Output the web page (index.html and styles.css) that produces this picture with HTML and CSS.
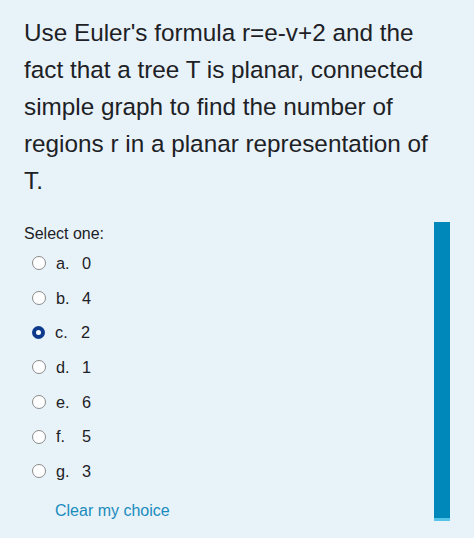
FILE: index.html
```html
<!DOCTYPE html>
<html>
<head>
<meta charset="utf-8">
<link rel="stylesheet" href="styles.css">
</head>
<body>
<div class="que">
  <div class="qtext">Use Euler's formula r=e-v+2 and the fact that a tree T is planar, connected simple graph to find the number of regions r in a planar representation of T.</div>
  <div class="ablock">
    <div class="answers">
      <div class="prompt">Select one:</div>
      <div class="opt"><span class="radio"></span><span class="letter">a.</span><span class="val">0</span></div>
      <div class="opt"><span class="radio"></span><span class="letter">b.</span><span class="val">4</span></div>
      <div class="opt"><span class="radio checked"></span><span class="letter">c.</span><span class="val">2</span></div>
      <div class="opt"><span class="radio"></span><span class="letter">d.</span><span class="val">1</span></div>
      <div class="opt"><span class="radio"></span><span class="letter">e.</span><span class="val">6</span></div>
      <div class="opt"><span class="radio"></span><span class="letter">f.</span><span class="val">5</span></div>
      <div class="opt"><span class="radio"></span><span class="letter">g.</span><span class="val">3</span></div>
      <div class="clear">Clear my choice</div>
    </div>
    <div class="bar"></div>
  </div>
</div>
</body>
</html>
```
FILE: styles.css
```css
html, body {
  margin: 0;
  padding: 0;
  background: #e8f3f9;
}
body {
  font-family: "Liberation Sans", Arial, sans-serif;
  color: #1d2125;
  width: 474px;
  height: 538px;
  overflow: hidden;
}
.que {
  padding: 14px 24px 0 24px;
}
.qtext {
  font-size: 24.3px;
  line-height: 37px;
  width: 405px;
}
.ablock {
  display: flex;
  margin-top: 23px;
}
.answers {
  flex: 1;
  padding-top: 2px;
}
.prompt {
  font-size: 16px;
  line-height: 20px;
  margin-bottom: 2px;
}
.opt {
  height: 34.7px;
  display: flex;
  align-items: center;
  font-size: 16.3px;
  padding-left: 8px;
}
.radio {
  width: 12px;
  height: 12px;
  border: 1px solid #8a8a8a;
  border-radius: 50%;
  background: #fff;
  box-sizing: content-box;
  flex: none;
}
.radio.checked {
  width: 5px;
  height: 5px;
  border: 4px solid #0e3a8c;
}
.letter {
  margin-left: 10px;
  width: 26px;
}
.clear {
  margin-top: 12px;
  margin-left: 31px;
  font-size: 16px;
  line-height: 20px;
  color: #1a8bbd;
}
.bar {
  width: 16px;
  flex: none;
  background: #0088bb;
  border-bottom: 3px solid #55c2e8;
}
```
